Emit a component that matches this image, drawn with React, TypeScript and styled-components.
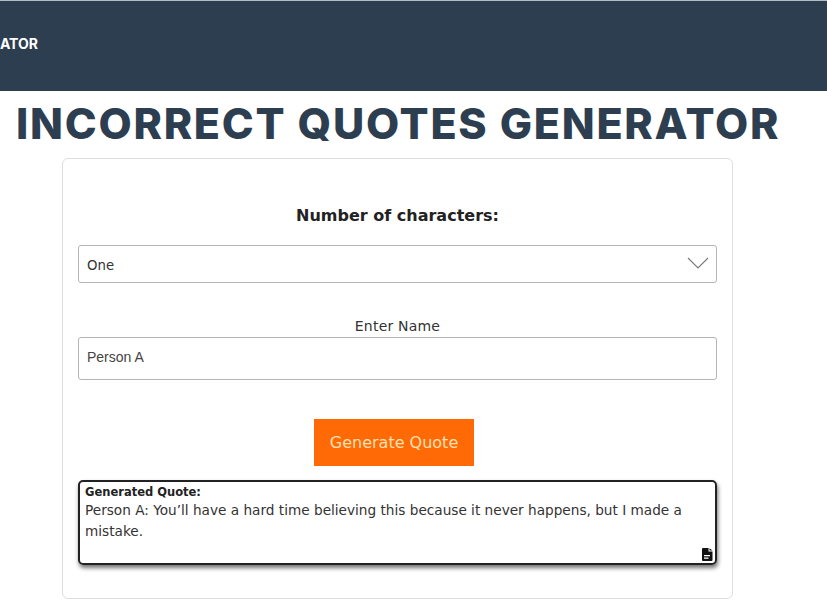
import React from "react";
import styled, { createGlobalStyle } from "styled-components";

const Global = createGlobalStyle`
  html, body { margin: 0; padding: 0; background: #fff; }
  body { width: 827px; height: 610px; overflow: hidden; font-family: "DejaVu Sans", Verdana, sans-serif; }
  * { box-sizing: border-box; }
`;

const Page = styled.div`
  width: 827px;
  height: 610px;
  display: flex;
  flex-direction: column;
  overflow: hidden;
`;

const Header = styled.header`
  height: 91px;
  flex: none;
  background: #2c3e50;
  border-top: 1px solid #b4bcc4;
  display: flex;
  align-items: center;
`;

const Brand = styled.div`
  width: 38px;
  height: 16px;
  overflow: hidden;
  display: flex;
  justify-content: flex-end;
  white-space: nowrap;
  margin-top: -4px;
  font: 700 14px/16px Inter, "Liberation Sans", sans-serif;
  color: #fff;
`;

const Title = styled.h1`
  flex: none;
  margin: 0;
  padding: 7px 0 0 16px;
  height: 67px;
  font: 800 43px/50px Inter, "Liberation Sans", sans-serif;
  letter-spacing: 1.75px;
  color: #2c3e50;
  white-space: nowrap;
`;

const Card = styled.main`
  width: 671px;
  height: 441px;
  margin-left: 62px;
  border: 1px solid #dedede;
  border-radius: 6px;
  padding: 0 15px;
  display: flex;
  flex-direction: column;
`;

const CountLabel = styled.h2`
  margin: 47px 0 0;
  height: 20px;
  text-align: center;
  font: 700 16px/20px "DejaVu Sans", Verdana, sans-serif;
  color: #222;
`;

const SelectBox = styled.div`
  margin-top: 19px;
  height: 38px;
  border: 1px solid #b5b5b5;
  border-radius: 3px;
  padding: 0 7px 0 8px;
  display: flex;
  align-items: center;
  justify-content: space-between;
  font-size: 13.3px;
  color: #333;
`;

const SelectText = styled.span`
  padding-top: 3px;
`;

const Chevron = styled.svg`
  width: 22px;
  height: 14px;
  margin-top: -2px;
`;

const NameLabel = styled.label`
  display: block;
  margin-top: 34px;
  height: 18px;
  text-align: center;
  font-size: 14px;
  line-height: 18px;
  letter-spacing: 0.2px;
  color: #333;
`;

const NameInput = styled.div`
  height: 43px;
  margin-top: 2px;
  border: 1px solid #b5b5b5;
  border-radius: 3px;
  padding: 0 8px 3px;
  display: flex;
  align-items: center;
  font: 14px "Liberation Sans", Arial, sans-serif;
  color: #444;
`;

const ButtonRow = styled.div`
  margin-top: 39px;
  display: flex;
  justify-content: center;
  padding-right: 7px;
`;

const GenerateButton = styled.button`
  width: 160px;
  height: 47px;
  border: 0;
  padding: 0;
  background: #ff6a07;
  color: #ffe0b0;
  font: 16px "DejaVu Sans", Verdana, sans-serif;
`;

const QuoteBox = styled.section`
  position: relative;
  margin-top: 14px;
  height: 85px;
  border: 2px solid #222;
  border-radius: 5px;
  box-shadow: 1px 3px 4px rgba(0, 0, 0, 0.55);
  padding: 3px 5px 0;
  color: #333;
`;

const QuoteHeading = styled.div`
  font-size: 11.5px;
  line-height: 15px;
  font-weight: 700;
  color: #222;
`;

const QuoteText = styled.p`
  margin: 0;
  font-size: 13.65px;
  line-height: 21px;
`;

const CopyIcon = styled.svg`
  position: absolute;
  right: 2px;
  bottom: 2px;
  width: 11px;
  height: 13px;
`;

export default function App() {
  return (
    <Page>
      <Global />
      <Header>
        <Brand>INCORRECT QUOTES GENERATOR</Brand>
      </Header>
      <Title>INCORRECT QUOTES GENERATOR</Title>
      <Card>
        <CountLabel>Number of characters:</CountLabel>
        <SelectBox>
          <SelectText>One</SelectText>
          <Chevron viewBox="0 0 22 14" fill="none" stroke="#777" strokeWidth="1.1">
            <path d="M1 2l10 10L21 2" />
          </Chevron>
        </SelectBox>
        <NameLabel>Enter Name</NameLabel>
        <NameInput>Person A</NameInput>
        <ButtonRow>
          <GenerateButton>Generate Quote</GenerateButton>
        </ButtonRow>
        <QuoteBox>
          <QuoteHeading>Generated Quote:</QuoteHeading>
          <QuoteText>
            Person A: You’ll have a hard time believing this because it never happens, but I made a mistake.
          </QuoteText>
          <CopyIcon viewBox="0 0 11 13">
            <path
              fill="#111"
              fillRule="evenodd"
              d="M1 0h5.5v3.5H10.5V12a1 1 0 0 1-1 1H1a1 1 0 0 1-1-1V1a1 1 0 0 1 1-1zM7.5 0.2L10.5 2.6H7.5zM2 7v1.2h6V7zM2 9.5v1.2h4.5V9.5z"
            />
          </CopyIcon>
        </QuoteBox>
      </Card>
    </Page>
  );
}
